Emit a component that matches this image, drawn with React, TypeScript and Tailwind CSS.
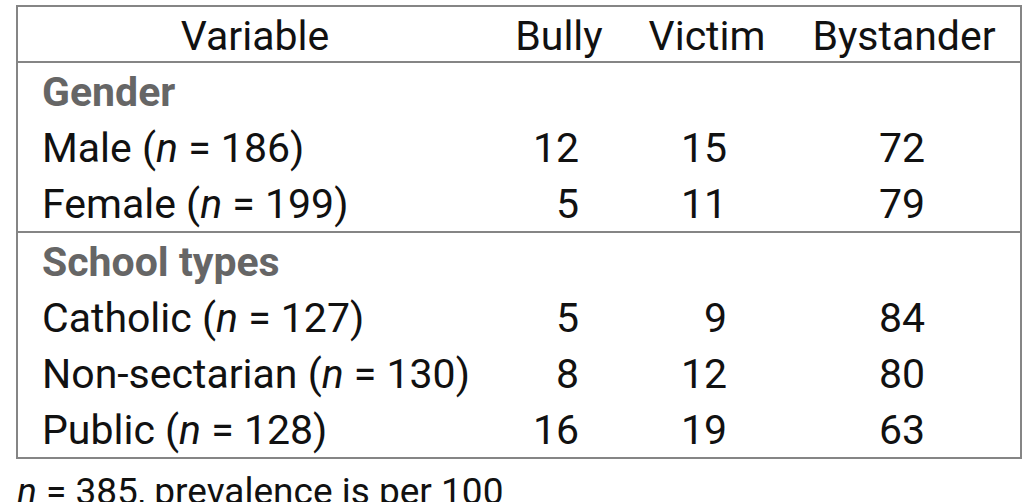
const sections = [
  {
    title: 'Gender',
    rows: [
      { label: 'Male', n: 186, bully: 12, victim: 15, bystander: 72 },
      { label: 'Female', n: 199, bully: 5, victim: 11, bystander: 79 },
    ],
  },
  {
    title: 'School types',
    rows: [
      { label: 'Catholic', n: 127, bully: 5, victim: 9, bystander: 84 },
      { label: 'Non-sectarian', n: 130, bully: 8, victim: 12, bystander: 80 },
      { label: 'Public', n: 128, bully: 16, victim: 19, bystander: 63 },
    ],
  },
];

const cols = 'grid grid-cols-[474px_134px_162px_232px]';

const App = () => {
  return (
    <div className="min-h-screen bg-white pl-[16px] pt-[5px] font-['Roboto',sans-serif] text-[#111]">
      <div className="w-[1006px] border-2 border-[#858585]">
        {/* Header */}
        <div className={`${cols} h-[56px] border-b-2 border-[#858585] text-[41px] leading-[58px] text-center`}>
          <div>Variable</div>
          <div>Bully</div>
          <div>Victim</div>
          <div>Bystander</div>
        </div>

        {sections.map((section, i) => (
          <div
            key={section.title}
            className={i < sections.length - 1 ? 'border-b-2 border-[#858585]' : ''}
          >
            <div className="h-[56px] pl-[24px] text-[41px] leading-[58px] font-bold text-[#666]">
              {section.title}
            </div>
            {section.rows.map((row) => (
              <div key={row.label} className={`${cols} h-[56px] text-[41px] leading-[58px]`}>
                <div className="pl-[24px] whitespace-nowrap">
                  {row.label} (<span className="italic">n</span> = {row.n})
                </div>
                <div className="text-right pr-[47px]">{row.bully}</div>
                <div className="text-right pr-[61px]">{row.victim}</div>
                <div className="text-right pr-[95px]">{row.bystander}</div>
              </div>
            ))}
          </div>
        ))}
      </div>

      <p className="mt-[12px] pl-[1px] text-[37px] leading-[42px] whitespace-nowrap">
        <span className="italic">n</span> = 385, prevalence is per 100
      </p>
    </div>
  );
};

export default App;
